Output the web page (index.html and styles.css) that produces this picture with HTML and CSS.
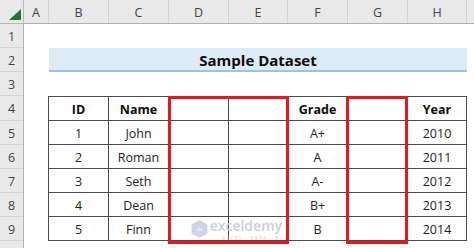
FILE: index.html
```html
<!DOCTYPE html>
<html>
<head>
<meta charset="utf-8">
<link rel="stylesheet" href="styles.css">
</head>
<body>
<div class="sheet">
  <div class="corner">
    <svg class="tri" width="12" height="11" viewBox="0 0 12 11"><polygon points="12,0 12,11 0,11" fill="#217346"/></svg>
  </div>
  <div class="colhead">
    <div class="ch">A</div>
    <div class="ch">B</div>
    <div class="ch">C</div>
    <div class="ch">D</div>
    <div class="ch">E</div>
    <div class="ch">F</div>
    <div class="ch">G</div>
    <div class="ch">H</div>
    <div class="ch last"></div>
  </div>
  <div class="rowhead">
    <div class="rh">1</div>
    <div class="rh">2</div>
    <div class="rh">3</div>
    <div class="rh">4</div>
    <div class="rh">5</div>
    <div class="rh">6</div>
    <div class="rh">7</div>
    <div class="rh">8</div>
    <div class="rh">9</div>
    <div class="rh"></div>
  </div>
  <div class="cells">
    <div class="title">Sample Dataset</div>
    <div class="table">
      <div class="c h">ID</div><div class="c h">Name</div><div class="c"></div><div class="c"></div><div class="c h">Grade</div><div class="c"></div><div class="c h">Year</div>
      <div class="c">1</div><div class="c">John</div><div class="c"></div><div class="c"></div><div class="c">A+</div><div class="c"></div><div class="c">2010</div>
      <div class="c">2</div><div class="c">Roman</div><div class="c"></div><div class="c"></div><div class="c">A</div><div class="c"></div><div class="c">2011</div>
      <div class="c">3</div><div class="c">Seth</div><div class="c"></div><div class="c"></div><div class="c">A-</div><div class="c"></div><div class="c">2012</div>
      <div class="c">4</div><div class="c">Dean</div><div class="c"></div><div class="c"></div><div class="c">B+</div><div class="c"></div><div class="c">2013</div>
      <div class="c">5</div><div class="c">Finn</div><div class="c"></div><div class="c"></div><div class="c">B</div><div class="c"></div><div class="c">2014</div>
    </div>
    <div class="watermark">
      <svg class="wm-icon" width="17" height="18" viewBox="0 0 17 18">
        <path d="M8.5 1 L15.5 5 L15.5 13 L8.5 17 L1.5 13 L1.5 5 Z" fill="#cdd5e3" stroke="#cdd5e3" stroke-width="2" stroke-linejoin="round"/>
        <path d="M5 11 L8.5 6 L12 11 Z" fill="#e3e8f0"/>
      </svg>
      <div class="wm-text">
        <span class="wm-name">exceldemy</span>
        <span class="wm-sub">EXCEL · DATA · BI</span>
      </div>
    </div>
    <div class="mark mark-de"></div>
    <div class="mark mark-g"></div>
  </div>
</div>
</body>
</html>
```

FILE: styles.css
```css
html, body {
  margin: 0;
  padding: 0;
  background: #ffffff;
}

.sheet {
  width: 474px;
  height: 248px;
  overflow: hidden;
  display: grid;
  grid-template-columns: 24px 450px;
  grid-template-rows: 24px 224px;
  font-family: "Open Sans", "Liberation Sans", sans-serif;
  color: #222;
}

.corner {
  background: #e9e9e9;
  border-right: 1px solid #b8b8b8;
  border-bottom: 1px solid #b8b8b8;
  box-sizing: border-box;
  display: flex;
  padding: 9px 0 0 9px;
}

.colhead {
  display: grid;
  grid-template-columns: 25px 60px 60px 60px 59px 60px 60px 59px 1fr;
  background: #e9e9e9;
  border-bottom: 1px solid #b0b0b0;
  box-sizing: border-box;
}

.ch {
  border-right: 1px solid #d2d2d2;
  display: flex;
  align-items: center;
  justify-content: center;
  font-size: 12.5px;
  color: #444;
  padding-top: 1px;
}

.ch.last {
  border-right: none;
}

.rowhead {
  display: grid;
  grid-template-rows: repeat(10, 24.15px);
  align-content: start;
  background: #e9e9e9;
  border-right: 1px solid #b0b0b0;
  box-sizing: border-box;
}

.rh {
  border-bottom: 1px solid #d2d2d2;
  display: flex;
  align-items: center;
  justify-content: center;
  font-size: 12.5px;
  color: #444;
  padding-top: 2px;
  box-sizing: border-box;
}

.cells {
  display: grid;
  grid-template-columns: 25px 60px 60px 60px 59px 60px 60px 59px 1fr;
  grid-template-rows: repeat(10, 24.15px);
  align-content: start;
  background: #ffffff;
}

.title {
  grid-column: 2 / 9;
  grid-row: 2;
  background: #ddebf7;
  border-bottom: 2px solid #9cc3e6;
  box-sizing: border-box;
  display: flex;
  align-items: center;
  justify-content: center;
  font-size: 15px;
  font-weight: 700;
  color: #0d0d0d;
  padding-top: 2px;
}

.table {
  grid-column: 2 / 9;
  grid-row: 4 / 10;
  display: grid;
  grid-template-columns: 60px 60px 60px 59px 60px 60px 1fr;
  grid-template-rows: repeat(6, 1fr);
  border-top: 1px solid #4a4a4a;
  border-left: 1px solid #4a4a4a;
  box-sizing: border-box;
  margin-left: -1px;
}

.c {
  border-right: 1px solid #4a4a4a;
  border-bottom: 1px solid #4a4a4a;
  display: flex;
  align-items: center;
  justify-content: center;
  font-size: 12.5px;
  color: #222;
  padding-top: 2px;
}

.c.h {
  font-weight: 700;
  font-size: 12.5px;
  color: #0d0d0d;
}

.mark {
  grid-row: 4 / 10;
  border: 3px solid #e8161d;
  margin-bottom: -3px;
}

.mark-de {
  grid-column: 4 / 6;
  margin-left: -1px;
  margin-right: -1px;
}

.mark-g {
  grid-column: 7 / 8;
  margin-left: -2px;
}

.watermark {
  grid-column: 4 / 6;
  grid-row: 9;
  display: flex;
  align-items: center;
  justify-content: flex-end;
  gap: 2px;
  padding-right: 6px;
}

.wm-text {
  display: flex;
  flex-direction: column;
  align-items: flex-end;
}

.wm-name {
  font-size: 14px;
  font-weight: 600;
  color: #c8d0e0;
  line-height: 19px;
}

.wm-sub {
  font-size: 5px;
  letter-spacing: 1.2px;
  color: #c8d0e0;
  line-height: 7px;
}
```
